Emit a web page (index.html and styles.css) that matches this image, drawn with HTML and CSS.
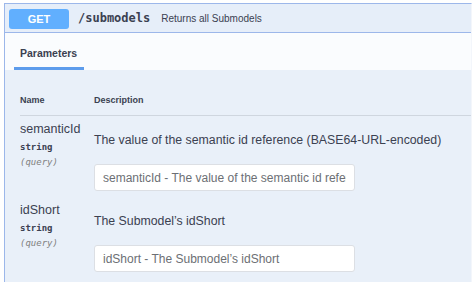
FILE: index.html
```html
<!DOCTYPE html>
<html>
<head>
    <meta charset="utf-8">
    <title>GET /submodels</title>
    <link rel="stylesheet" href="styles.css">
</head>
<body>
    <div class="opblock">
        <div class="summary">
            <span class="method">GET</span>
            <span class="path">/submodels</span>
            <span class="summary-desc">Returns all Submodels</span>
        </div>

        <div class="tabs">
            <div class="tab active">Parameters</div>
        </div>

        <div class="params">
            <div class="params-head">
                <div class="col-name">Name</div>
                <div class="col-desc">Description</div>
            </div>

            <div class="param">
                <div class="col-name">
                    <div class="param-name">semanticId</div>
                    <div class="param-type">string</div>
                    <div class="param-in">(query)</div>
                </div>
                <div class="col-desc">
                    <div class="param-text">The value of the semantic id reference (BASE64-URL-encoded)</div>
                    <input class="param-input" type="text" placeholder="semanticId - The value of the semantic id reference (BASE64-URL-encoded)">
                </div>
            </div>

            <div class="param">
                <div class="col-name">
                    <div class="param-name">idShort</div>
                    <div class="param-type">string</div>
                    <div class="param-in">(query)</div>
                </div>
                <div class="col-desc">
                    <div class="param-text">The Submodel’s idShort</div>
                    <input class="param-input" type="text" placeholder="idShort - The Submodel’s idShort">
                </div>
            </div>
        </div>
    </div>
</body>
</html>
```

FILE: styles.css
```css
body {
    margin: 0;
    background: #ffffff;
    font-family: "Liberation Sans", Arial, sans-serif;
    color: #3b4151;
}

.opblock {
    margin: 3px 2px 0 4px;
    height: 278px;
    border: 1px solid #9cb7ea;
    border-bottom: none;
    border-right-color: #f3f6fb;
    background: #e9f0f9;
    display: flex;
    flex-direction: column;
}

.summary {
    height: 28px;
    display: flex;
    align-items: center;
    padding-left: 4px;
    background: #e6eef9;
    border-bottom: 1px solid #9cb7ea;
}

.method {
    width: 60px;
    height: 20px;
    line-height: 20px;
    margin-top: 2px;
    border-radius: 3px;
    background: #61affe;
    color: #ffffff;
    font-weight: bold;
    font-size: 11px;
    text-align: center;
}

.path {
    margin-left: 9px;
    font-family: "DejaVu Sans Mono", monospace;
    font-weight: bold;
    font-size: 12px;
    color: #3b4151;
}

.summary-desc {
    margin-left: 11px;
    font-size: 10px;
    color: #3b4151;
}

.tabs {
    height: 37px;
    background: #fafcfe;
    display: flex;
    align-items: flex-end;
    padding-left: 9px;
}

.tab {
    width: 64px;
    padding: 0 0 8px 6px;
    font-size: 10.5px;
    font-weight: bold;
    border-bottom: 3px solid #5d9cec;
}

.params {
    padding: 0 0 0 15px;
}

.params-head {
    display: flex;
    height: 26px;
    line-height: 22px;
    margin-top: 19px;
    font-size: 9px;
    font-weight: bold;
    border-bottom: 1px solid #cfd6df;
}

.col-name {
    width: 74px;
    flex: none;
}

.col-desc {
    flex: 1;
}

.param {
    display: flex;
    padding-top: 6px;
}

.param + .param {
    padding-top: 12px;
}

.param-name {
    font-size: 12.5px;
    line-height: 15px;
}

.param-type {
    margin-top: 3px;
    font-family: "DejaVu Sans Mono", monospace;
    font-weight: bold;
    font-size: 9px;
    line-height: 14px;
}

.param-in {
    margin-top: 1px;
    font-family: "DejaVu Sans Mono", monospace;
    font-style: italic;
    font-size: 9px;
    line-height: 14px;
    color: #808080;
}

.param-text {
    margin-top: 11px;
    font-size: 12.3px;
    line-height: 15px;
}

.param-input {
    display: block;
    box-sizing: border-box;
    width: 261px;
    height: 27px;
    margin-top: 16px;
    padding: 0 8px;
    border: 1px solid #dcdfe4;
    border-radius: 3px;
    background: #ffffff;
    font-family: "Liberation Sans", Arial, sans-serif;
    font-size: 12px;
    color: #3b4151;
}

.param-input::placeholder {
    color: #6c6f74;
}
```
